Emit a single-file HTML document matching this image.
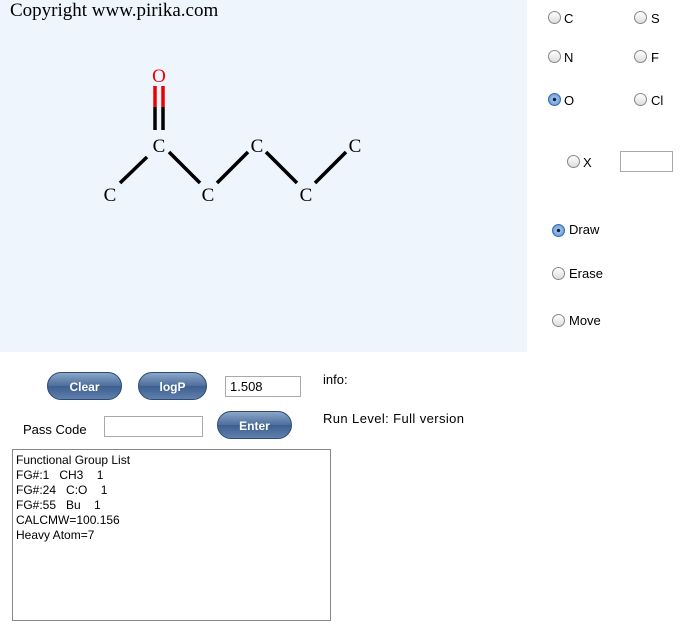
<!DOCTYPE html><html><head><style>
body{margin:0;width:692px;height:626px;background:#fff;position:relative;font-family:"Liberation Sans",sans-serif;overflow:hidden}
.a{position:absolute}
.canvas{left:0;top:0;width:527px;height:352px;background:#eef5fc}
.r{position:absolute;width:13px;height:13px;border-radius:50%;border:1px solid #888;background:linear-gradient(#fff,#ddd);box-sizing:border-box}
.r.on{border-color:#3a6aa8;background:radial-gradient(circle,#123 0 1.5px,#9cc3ee 2px,#5b8fcf 7px)}
.l{position:absolute;font-size:13px;color:#000}
.btn{position:absolute;height:28px;border-radius:14px;background:linear-gradient(#8aa6c8,#4d6e9c 50%,#3d5f8f 51%,#5f80ad);color:#fff;font-weight:bold;font-size:12px;text-align:center;line-height:28px;border:1px solid #2f4b75;box-sizing:border-box}
.inp{position:absolute;border:1px solid #aaa;box-sizing:border-box;background:#fff;font-size:13px}
</style></head><body>
<div class="a canvas"></div>
<div class="a" style="left:10px;top:0px;font-family:'Liberation Serif',serif;font-size:19px">Copyright www.pirika.com</div>
<svg class="a" style="left:0;top:0" width="527" height="352">
<g stroke-width="3.5">
<line x1="155" y1="86" x2="155" y2="107" stroke="#e00"/><line x1="163" y1="86" x2="163" y2="107" stroke="#e00"/>
<line x1="155" y1="107" x2="155" y2="130" stroke="#000"/><line x1="163" y1="107" x2="163" y2="130" stroke="#000"/>
<g stroke="#000">
<line x1="120" y1="183" x2="147" y2="157"/>
<line x1="169" y1="152" x2="200" y2="183"/>
<line x1="217" y1="183" x2="248" y2="152"/>
<line x1="266" y1="152" x2="297" y2="183"/>
<line x1="315" y1="183" x2="346" y2="152"/>
</g></g>
<g font-family="Liberation Serif,serif" font-size="19" text-anchor="middle">
<text x="159" y="82" fill="#e00">O</text>
<text x="159" y="152">C</text><text x="110" y="201">C</text><text x="208" y="201">C</text>
<text x="257" y="152">C</text><text x="306" y="201">C</text><text x="355" y="152">C</text>
</g></svg>
<div class="r" style="left:548px;top:11px"></div><div class="l" style="left:564px;top:11px">C</div>
<div class="r" style="left:634px;top:11px"></div><div class="l" style="left:651px;top:11px">S</div>
<div class="r" style="left:548px;top:50px"></div><div class="l" style="left:564px;top:50px">N</div>
<div class="r" style="left:634px;top:50px"></div><div class="l" style="left:651px;top:50px">F</div>
<div class="r on" style="left:548px;top:93px"></div><div class="l" style="left:564px;top:93px">O</div>
<div class="r" style="left:634px;top:93px"></div><div class="l" style="left:651px;top:93px">Cl</div>
<div class="r" style="left:567px;top:155px"></div><div class="l" style="left:583px;top:155px">X</div>
<div class="inp" style="left:620px;top:151px;width:53px;height:21px"></div>
<div class="r on" style="left:552px;top:224px"></div><div class="l" style="left:569px;top:222px">Draw</div>
<div class="r" style="left:552px;top:267px"></div><div class="l" style="left:569px;top:266px">Erase</div>
<div class="r" style="left:552px;top:314px"></div><div class="l" style="left:569px;top:313px">Move</div>
<div class="btn" style="left:47px;top:372px;width:75px">Clear</div>
<div class="btn" style="left:138px;top:372px;width:69px">logP</div>
<div class="inp" style="left:225px;top:376px;width:76px;height:21px;padding:2px 4px">1.508</div>
<div class="l" style="left:323px;top:372px">info:</div>
<div class="l" style="left:23px;top:422px">Pass Code</div>
<div class="inp" style="left:104px;top:416px;width:99px;height:21px"></div>
<div class="btn" style="left:217px;top:411px;width:75px">Enter</div>
<div class="l" style="left:323px;top:411px;letter-spacing:0.4px">Run Level: Full version</div>
<div class="inp" style="left:12px;top:449px;width:319px;height:172px;border-color:#888;padding:3px 3px;font-size:12px;line-height:15px">Functional Group List<br>FG#:1&nbsp;&nbsp;&nbsp;CH3&nbsp;&nbsp;&nbsp;&nbsp;1<br>FG#:24&nbsp;&nbsp;&nbsp;C:O&nbsp;&nbsp;&nbsp;&nbsp;1<br>FG#:55&nbsp;&nbsp;&nbsp;Bu&nbsp;&nbsp;&nbsp;&nbsp;1<br>CALCMW=100.156<br>Heavy Atom=7</div>
</body></html>
